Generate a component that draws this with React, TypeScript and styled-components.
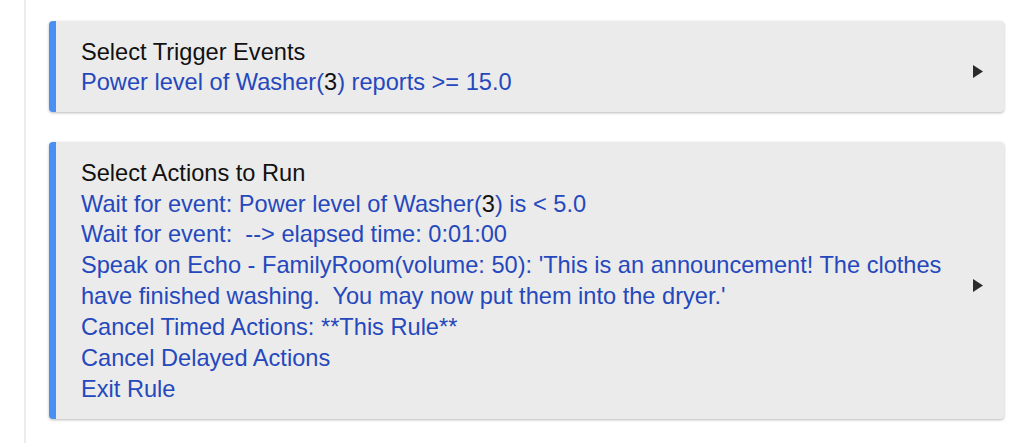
import React from "react";
import styled, { createGlobalStyle } from "styled-components";

const GlobalStyle = createGlobalStyle`
  html, body {
    margin: 0;
    padding: 0;
    background: #fff;
  }
  body {
    font-family: "Liberation Sans", Arial, Helvetica, sans-serif;
  }
`;

const Page = styled.div`
  padding-left: 24px;
  min-height: 100vh;
  box-sizing: border-box;
`;

const Panel = styled.div`
  border-left: 2px solid #ececec;
  min-height: 100vh;
  box-sizing: border-box;
  padding: 21px 20px 0 23px;
  display: flex;
  flex-direction: column;
  gap: 30px;
`;

const Card = styled.div`
  display: flex;
  align-items: center;
  background-color: #ebebeb;
  border-left: 7px solid #4a8ff2;
  border-radius: 4px;
  box-shadow: 0 1px 3px rgba(0, 0, 0, 0.28);
  padding: 15.5px 21px 14px 25px;
  cursor: pointer;
`;

const CardBody = styled.div`
  flex: 1;
  min-width: 0;
  font-size: 23.6px;
  line-height: 30.86px;
`;

const CardTitle = styled.div`
  color: #111;
`;

const Line = styled.div`
  color: #2548bd;
  white-space: pre-wrap;
  & > b {
    font-weight: normal;
    color: #111;
  }
`;

const Arrow = styled.svg`
  flex: none;
  width: 10px;
  height: 13px;
  margin-left: 12px;
  margin-top: 8px;
`;

type RuleSectionProps = {
  title: string;
  lines: React.ReactNode[];
};

const RuleSection: React.FC<RuleSectionProps> = ({ title, lines }) => {
  return (
    <Card>
      <CardBody>
        <CardTitle>{title}</CardTitle>
        {lines.map((line, i) => (
          <Line key={i}>{line}</Line>
        ))}
      </CardBody>
      <Arrow viewBox="0 0 10 13">
        <polygon points="0,0 10,6.5 0,13" fill="#2b2b2b" />
      </Arrow>
    </Card>
  );
};

export default function App() {
  return (
    <>
      <GlobalStyle />
      <Page>
        <Panel>
          <RuleSection
            title="Select Trigger Events"
            lines={[
              <>
                Power level of Washer(<b>3</b>) reports &gt;= 15.0
              </>
            ]}
          />
          <RuleSection
            title="Select Actions to Run"
            lines={[
              <>
                Wait for event: Power level of Washer(<b>3</b>) is &lt; 5.0
              </>,
              "Wait for event:  --> elapsed time: 0:01:00",
              "Speak on Echo - FamilyRoom(volume: 50): 'This is an announcement! The clothes have finished washing.  You may now put them into the dryer.'",
              "Cancel Timed Actions: **This Rule**",
              "Cancel Delayed Actions",
              "Exit Rule"
            ]}
          />
        </Panel>
      </Page>
    </>
  );
}
